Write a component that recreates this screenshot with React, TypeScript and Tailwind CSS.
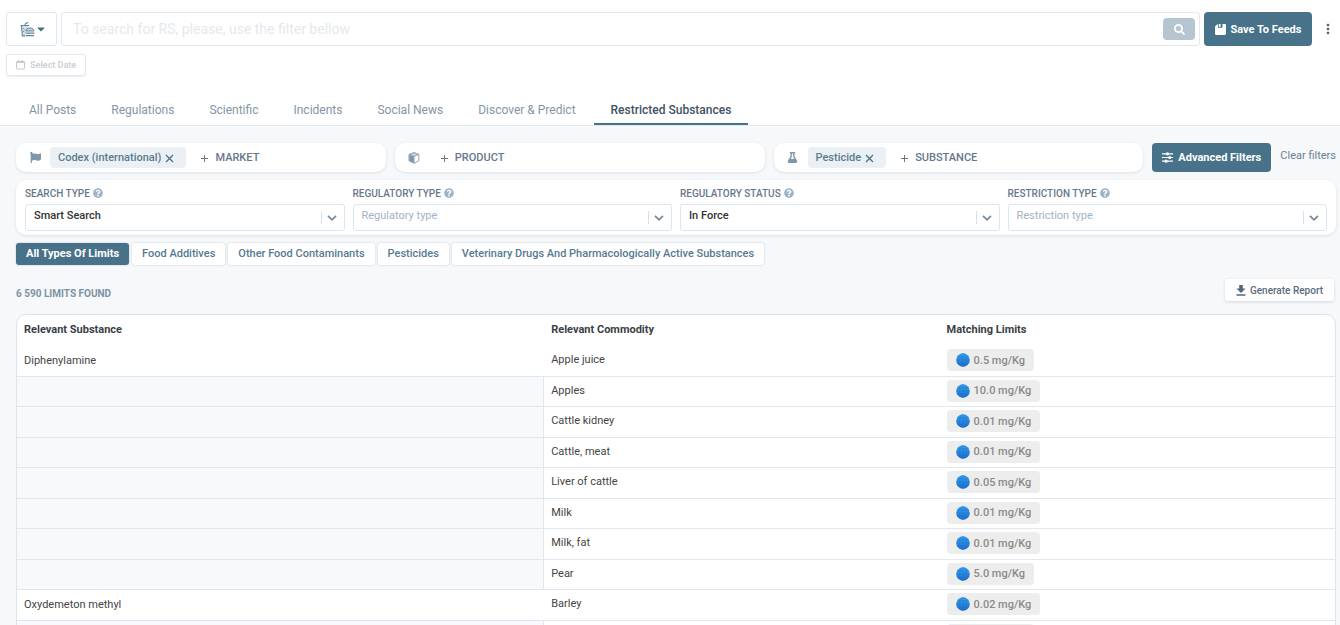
import React, { useState } from "react";
import {
  FaCaretDown,
  FaFlag,
  FaFlask,
  FaQuestionCircle,
  FaSearch,
} from "react-icons/fa";
import { MdMoreVert } from "react-icons/md";

const tabs = [
  "All Posts",
  "Regulations",
  "Scientific",
  "Incidents",
  "Social News",
  "Discover & Predict",
  "Restricted Substances",
];

const limitTypes = [
  "All Types Of Limits",
  "Food Additives",
  "Other Food Contaminants",
  "Pesticides",
  "Veterinary Drugs And Pharmacologically Active Substances",
];

type Limit = { substance?: string; commodity: string; limit: string };

const limits: Limit[] = [
  { substance: "Diphenylamine", commodity: "Apple juice", limit: "0.5 mg/Kg" },
  { commodity: "Apples", limit: "10.0 mg/Kg" },
  { commodity: "Cattle kidney", limit: "0.01 mg/Kg" },
  { commodity: "Cattle, meat", limit: "0.01 mg/Kg" },
  { commodity: "Liver of cattle", limit: "0.05 mg/Kg" },
  { commodity: "Milk", limit: "0.01 mg/Kg" },
  { commodity: "Milk, fat", limit: "0.01 mg/Kg" },
  { commodity: "Pear", limit: "5.0 mg/Kg" },
  { substance: "Oxydemeton methyl", commodity: "Barley", limit: "0.02 mg/Kg" },
  { commodity: "Cattle fat", limit: "0.1 mg/Kg" },
];

function FoodIcon() {
  return (
    <svg width="15" height="15" viewBox="0 0 15 15" fill="none" stroke="#5f8499">
      <path d="M1.500 4l.9 9.800h3l-.2-4 2.800-4V4z" fill="#d5e0e7" stroke="none" />
      <path d="M.6 3.500h8.600M1.400 3.700l1 10.200h2.800M4.800 3.400l.8-2L8.200.5" strokeWidth="1.100" />
      <path d="M3.200 6.200l1.200 1.200M3.200 9.500h1" strokeWidth="1" />
      <path
        d="M5.800 9c0-2 1.600-3 4.100-3s4.100 1 4.100 3z"
        fill="#c3d2db"
        strokeWidth="1"
      />
      <path d="M5.300 11.200h9.200M5.800 13.600h8.200" strokeWidth="1.300" />
    </svg>
  );
}

function CalendarIcon() {
  return (
    <svg width="9" height="10" viewBox="0 0 9 10" fill="none" stroke="#c3c8cc">
      <rect x="0.5" y="1.5" width="8" height="7.5" rx="1" />
      <path d="M0.5 2.2h8" strokeWidth="1.4" />
      <path d="M2.5 0v2M6.5 0v2" />
    </svg>
  );
}

function SaveIcon() {
  return (
    <svg width="11" height="11" viewBox="0 0 11 11" fill="#fff">
      <path d="M2 .5h1v3.3h4.500V0h2.300c.7 0 1.200.5 1.200 1.200v8.600c0 .7-.5 1.200-1.200 1.200H1.200C.5 11 0 10.500 0 9.800V2.500z" />
      <path d="M3.800 0h1.800v2.800H3.800z" />
    </svg>
  );
}

function SlidersIcon() {
  return (
    <svg width="11" height="11" viewBox="0 0 11 11" fill="#fff">
      <path d="M0 1.200h11v1.200H0zM0 4.900h11v1.200H0zM0 8.600h11v1.200H0z" />
      <circle cx="5.500" cy="1.800" r="1.600" />
      <circle cx="7.800" cy="5.500" r="1.600" />
      <circle cx="4" cy="9.200" r="1.600" />
    </svg>
  );
}

function CubeIcon() {
  return (
    <svg width="12" height="12" viewBox="0 0 12 12" stroke="#8fa5b5" strokeLinejoin="round">
      <path d="M6 .7l4.800 1.700v6.400L6 11.200 1.200 8.800V2.400z" fill="#fff" />
      <path d="M1.200 2.600L6 4.500v6.500L1.200 8.800z" fill="#7f97aa" />
      <path d="M1.200 2.500L6 .7l4.800 1.700L6 4.400z" fill="#c9d5de" />
    </svg>
  );
}

function DownloadIcon() {
  return (
    <svg width="10" height="11" viewBox="0 0 10 11" fill="#55677a">
      <path d="M3.200 0h3.600v3.500h2.700L5 8 .5 3.500h2.700zM.5 9.300h9v1.400h-9z" />
    </svg>
  );
}

function GlobeIcon() {
  return (
    <svg width="14" height="14" viewBox="0 0 14 14" fill="none">
      <defs>
        <linearGradient id="globe" x1="0" y1="0" x2="0" y2="1">
          <stop offset="0" stopColor="#35a0f0" />
          <stop offset="1" stopColor="#1c6fd0" />
        </linearGradient>
      </defs>
      <circle cx="7" cy="7" r="6.800" fill="url(#globe)" />
      <g stroke="#1766bd" strokeWidth="0.500" strokeOpacity="0.500">
        <path d="M.4 7h13.200M1.500 3.800h11M1.500 10.200h11M7 .4v13.200" />
        <ellipse cx="7" cy="7" rx="3.400" ry="6.600" />
      </g>
    </svg>
  );
}

function CloseIcon() {
  return (
    <svg width="9" height="9" viewBox="0 0 9 9" stroke="#48728a" strokeWidth="1.300">
      <path d="M1 1l7 7M8 1L1 8" />
    </svg>
  );
}

type FilterBoxProps = {
  icon: React.ReactNode;
  label: string;
  tag?: string;
};

function FilterBox({ icon, label, tag }: FilterBoxProps) {
  return (
    <div className="flex h-[29px] flex-1 items-center rounded-[10px] bg-white pl-3 shadow-[0_1px_3px_rgba(60,90,120,0.14)]">
      <span className="flex w-[14px] justify-center text-[#7f97aa]">{icon}</span>
      {tag && (
        <span className="ml-2 flex h-[21px] items-center gap-1 rounded bg-[#eaf0f3] pt-px pr-3 pl-2 text-[11px] font-medium text-[#5a7c92]">
          {tag}
          <button type="button" aria-label={`Remove ${tag}`}>
            <CloseIcon />
          </button>
        </span>
      )}
      <button
        type="button"
        className={`flex items-center gap-[7px] pt-[2px] text-[11px] font-medium text-[#66788a] ${
          tag ? "ml-[15px]" : "ml-5"
        }`}
      >
        <svg width="7" height="7" viewBox="0 0 7 7" stroke="currentColor">
          <path d="M3.500 0v7M0 3.500h7" />
        </svg>
        {label}
      </button>
    </div>
  );
}

type SelectFieldProps = {
  id: string;
  label: string;
  value?: string;
  placeholder?: string;
};

function SelectField({ id, label, value, placeholder }: SelectFieldProps) {
  return (
    <div className="flex-1">
      <div className="flex h-4 items-center gap-[3px]">
        <label htmlFor={id} className="pt-px text-[10px] font-medium text-[#66788a]">
          {label}
        </label>
        <FaQuestionCircle size={10} className="text-[#9db3c8]" />
      </div>
      <div className="relative mt-[3px]">
        <select
          id={id}
          className={`block h-[27px] w-full appearance-none rounded-[3px] border border-[#dde6f0] bg-white pr-8 pb-[2px] pl-2 text-[11px] outline-none ${
            value ? "font-medium text-[#333]" : "text-[#9fb3c6]"
          }`}
        >
          <option>{value ?? placeholder}</option>
        </select>
        <span className="pointer-events-none absolute inset-y-0 right-2 flex items-center gap-[5px]">
          <span className="h-[13px] w-px bg-[#d5e0ec]" />
          <svg
            width="10"
            height="6"
            viewBox="0 0 10 6"
            fill="none"
            stroke="#6f8aa0"
            strokeWidth="1.700"
          >
            <path d="M1 .8l4 4 4-4" />
          </svg>
        </span>
      </div>
    </div>
  );
}

function LimitsTable() {
  return (
    <div className="mt-[13px] rounded-[10px] border border-[#dbe5f0] bg-white">
      <table className="w-full table-fixed border-separate border-spacing-0 text-left text-[11px] leading-normal text-[#444]">
        <colgroup>
          <col className="w-2/5" />
          <col className="w-3/10" />
          <col className="w-3/10" />
        </colgroup>
        <thead>
          <tr className="h-[31px] text-[#3a3f45]">
            <th className="px-[7px] font-bold">Relevant Substance</th>
            <th className="px-[7px] font-bold">Relevant Commodity</th>
            <th className="px-[7px] font-bold">Matching Limits</th>
          </tr>
        </thead>
        <tbody>
          {limits.map((row) => (
            <tr key={row.commodity}>
              <td
                className={`border-b border-[#dfe8f2] px-[7px] ${
                  row.substance ? "" : "border-r bg-[#f7f9fb]"
                }`}
              >
                {row.substance}
              </td>
              <td className="border-b border-[#dfe8f2] px-[7px] pt-[6px] pb-[7px]">
                {row.commodity}
              </td>
              <td className="border-b border-[#dfe8f2] px-[7px] pt-[3px] pb-1">
                <span className="flex h-[22px] w-fit items-center gap-1 rounded bg-[#ededed] px-[9px] font-medium text-[#8a8a8a]">
                  <GlobeIcon />
                  <span className="pt-px">{row.limit}</span>
                </span>
              </td>
            </tr>
          ))}
        </tbody>
      </table>
    </div>
  );
}

function App() {
  const [activeTab, setActiveTab] = useState("Restricted Substances");
  const [activeType, setActiveType] = useState("All Types Of Limits");

  return (
    <div className="h-screen overflow-hidden bg-[#f6f8fa] font-[Roboto,sans-serif]">
      <header className="border-b border-[#e0e8f0] bg-white pt-3">
        <div className="flex items-center pr-1 pl-[6px]">
          <button
            type="button"
            aria-label="Source"
            className="flex h-[34px] w-[51px] items-center justify-center rounded-[3px] border border-[#dde6f2] pl-[3px] text-[#48728a]"
          >
            <FoodIcon />
            <FaCaretDown size={12} />
          </button>
          <div className="ml-1 flex h-[34px] flex-1 items-center rounded-[3px] border border-[#e3e9f1] pr-1 pl-[11px]">
            <input
              type="text"
              aria-label="Search"
              placeholder="To search for RS, please, use the filter bellow"
              className="flex-1 text-[14px] outline-none placeholder:text-[#e4e9ee]"
            />
            <button
              type="button"
              aria-label="Run search"
              className="flex h-[22px] w-8 items-center justify-center rounded bg-[#b5c6d0] text-white"
            >
              <FaSearch size={11} />
            </button>
          </div>
          <button
            type="button"
            className="ml-1 flex h-[34px] w-[108px] items-center justify-center gap-[5px] rounded bg-[#48728a] text-[11px] font-bold text-white"
          >
            <SaveIcon />
            <span className="pt-[2px]">Save To Feeds</span>
          </button>
          <button type="button" aria-label="More" className="ml-2 text-[#48607a]">
            <MdMoreVert size={16} />
          </button>
        </div>
        <button
          type="button"
          className="mt-2 ml-[6px] flex h-[22px] items-center gap-[5px] rounded-[3px] border border-[#e1e8f0] px-[9px] text-[9px] font-bold text-[#cfd3d6] shadow-[0_1px_2px_rgba(60,90,120,0.1)]"
        >
          <CalendarIcon />
          <span className="pt-px">Select Date</span>
        </button>
        <nav className="mt-[18px] ml-3 flex gap-px">
          {tabs.map((tab) => (
            <button
              key={tab}
              type="button"
              onClick={() => setActiveTab(tab)}
              className={`h-[31px] border-b-2 px-[17px] pt-[2px] text-[12px] ${
                tab === activeTab
                  ? "border-[#48728a] font-medium text-[#3f5163]"
                  : "border-transparent text-[#8296a6]"
              }`}
            >
              {tab}
            </button>
          ))}
        </nav>
      </header>

      <main className="pt-[17px] pr-1 pl-4">
        <div className="flex items-start gap-[9px]">
          <FilterBox
            icon={<FaFlag size={11} />}
            label="MARKET"
            tag="Codex (international)"
          />
          <FilterBox icon={<CubeIcon />} label="PRODUCT" />
          <FilterBox
            icon={<FaFlask size={11} />}
            label="SUBSTANCE"
            tag="Pesticide"
          />
          <button
            type="button"
            className="flex h-[29px] w-[119px] items-center justify-center gap-[5px] rounded bg-[#48728a] text-[11px] font-bold text-white"
          >
            <SlidersIcon />
            <span className="pt-[2px]">Advanced Filters</span>
          </button>
          <a href="#" className="pt-[5px] text-[11px] text-[#6a8295]">
            Clear filters
          </a>
        </div>

        <section className="mt-2 flex gap-2 rounded-[10px] bg-white px-[9px] pt-[5px] pb-1 shadow-[0_1px_3px_rgba(60,90,120,0.14)]">
          <SelectField id="search-type" label="SEARCH TYPE" value="Smart Search" />
          <SelectField
            id="regulatory-type"
            label="REGULATORY TYPE"
            placeholder="Regulatory type"
          />
          <SelectField
            id="regulatory-status"
            label="REGULATORY STATUS"
            value="In Force"
          />
          <SelectField
            id="restriction-type"
            label="RESTRICTION TYPE"
            placeholder="Restriction type"
          />
        </section>

        <div className="mt-2 flex gap-[3px]">
          {limitTypes.map((type) => (
            <button
              key={type}
              type="button"
              onClick={() => setActiveType(type)}
              className={`h-[22px] rounded-[3px] px-[10px] text-[11px] shadow-[0_0_2px_rgba(60,90,120,0.3)] ${
                type === activeType
                  ? "bg-[#48728a] font-bold text-white"
                  : "bg-white font-medium text-[#557a92]"
              }`}
            >
              {type}
            </button>
          ))}
        </div>

        <div className="mt-[14px] flex items-center justify-between pr-[2px]">
          <p className="pt-[6px] text-[10px] font-bold text-[#7c93a5]">
            6 590 LIMITS FOUND
          </p>
          <button
            type="button"
            className="flex h-[22px] items-center gap-1 rounded-[3px] bg-white px-[11px] text-[10px] font-medium text-[#5a6b7c] shadow-[0_1px_3px_rgba(60,90,120,0.2)]"
          >
            <DownloadIcon />
            Generate Report
          </button>
        </div>

        <LimitsTable />
      </main>
    </div>
  );
}

export default App;
